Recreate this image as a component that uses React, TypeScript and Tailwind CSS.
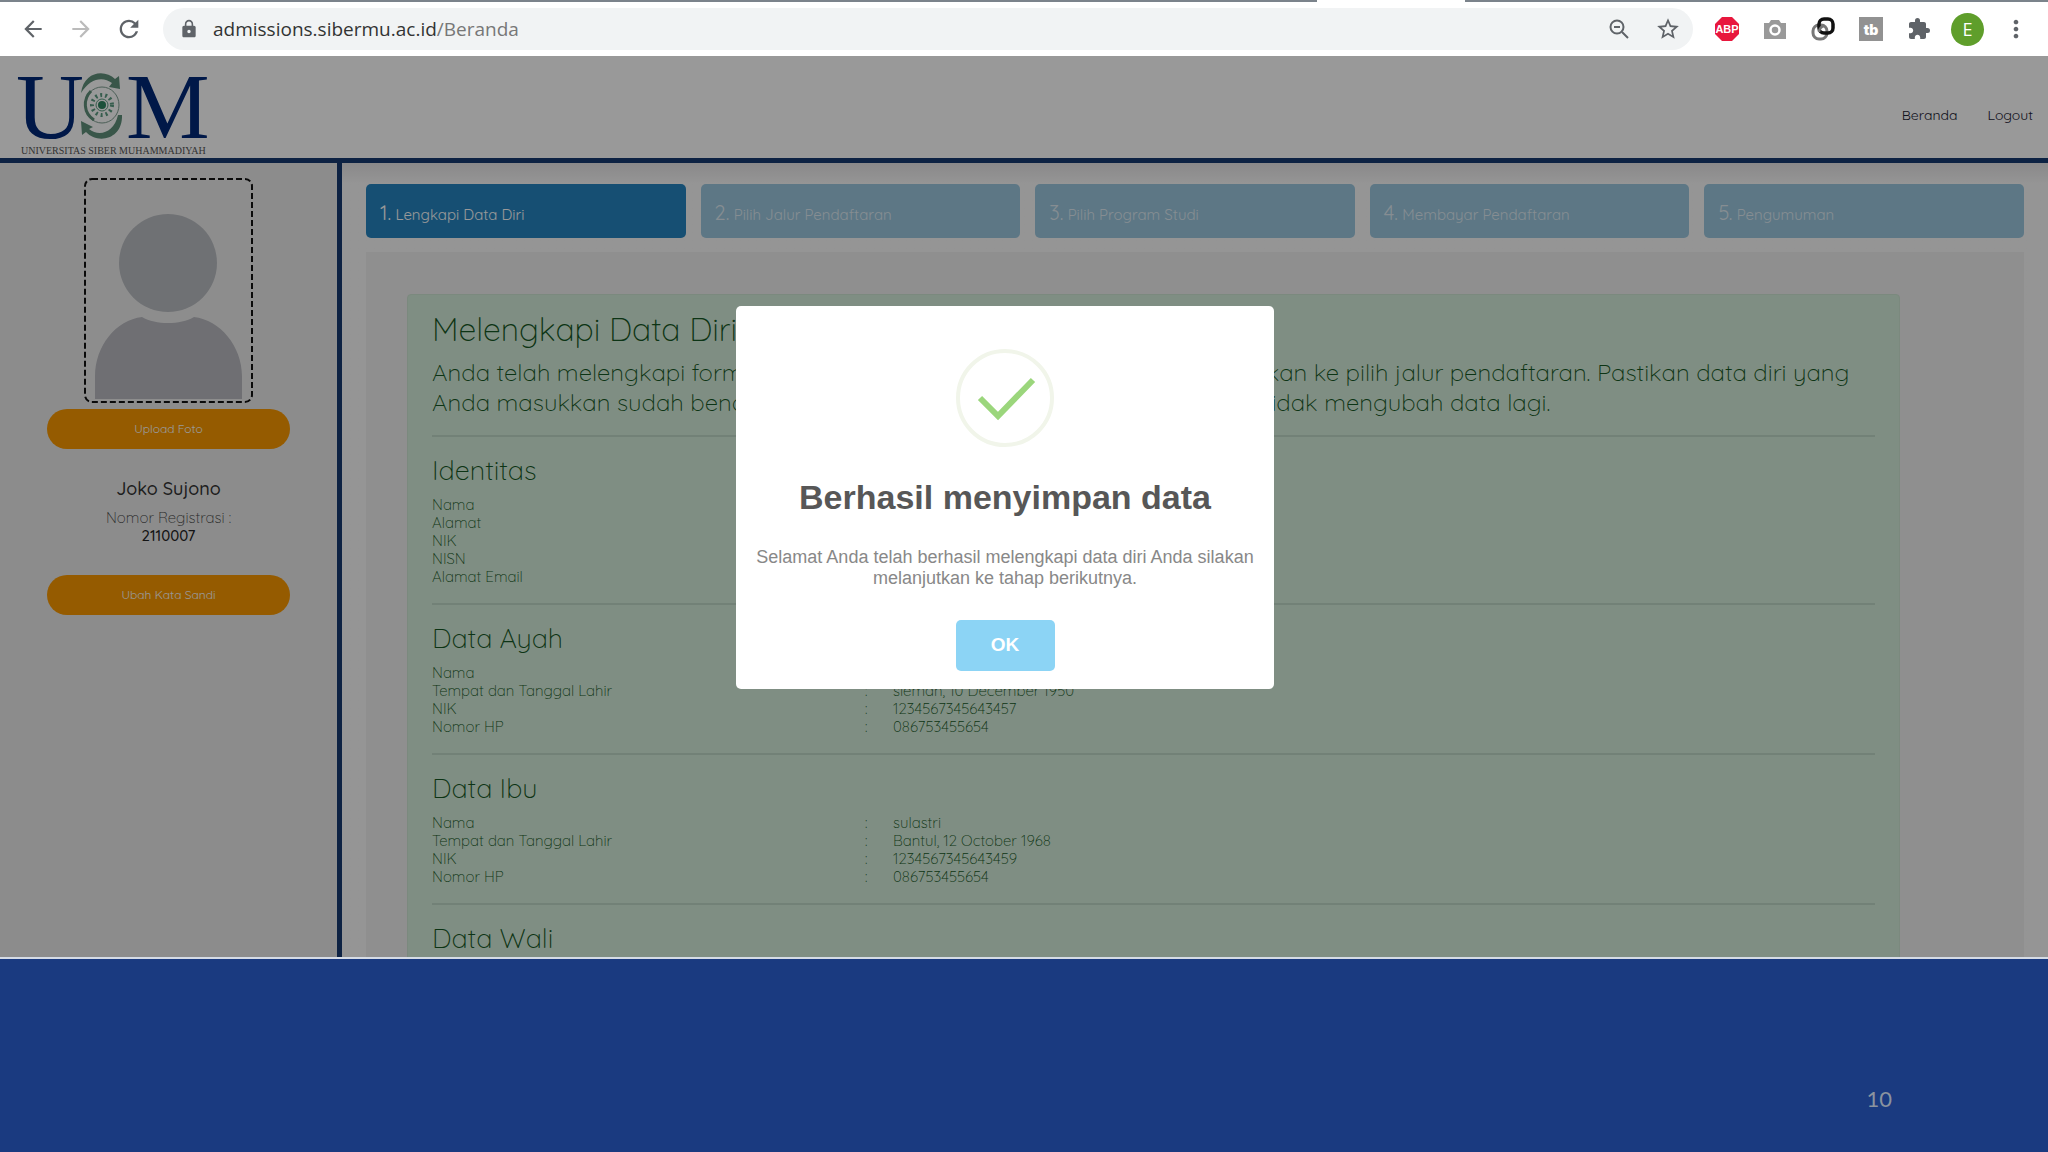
import React, { useState } from "react";
import { MdArrowBack, MdArrowForward, MdRefresh, MdLock, MdExtension, MdStarBorder, MdMoreVert } from "react-icons/md";

const steps = [
  "Lengkapi Data Diri",
  "Pilih Jalur Pendaftaran",
  "Pilih Program Studi",
  "Membayar Pendaftaran",
  "Pengumuman",
];

const sections = [
  {
    title: "Identitas",
    rows: [
      ["Nama", ""],
      ["Alamat", ""],
      ["NIK", ""],
      ["NISN", ""],
      ["Alamat Email", ""],
    ],
  },
  {
    title: "Data Ayah",
    rows: [
      ["Nama", ""],
      ["Tempat dan Tanggal Lahir", "sleman, 10 December 1950"],
      ["NIK", "1234567345643457"],
      ["Nomor HP", "086753455654"],
    ],
  },
  {
    title: "Data Ibu",
    rows: [
      ["Nama", "sulastri"],
      ["Tempat dan Tanggal Lahir", "Bantul, 12 October 1968"],
      ["NIK", "1234567345643459"],
      ["Nomor HP", "086753455654"],
    ],
  },
  { title: "Data Wali", rows: [] },
];

const ZoomOut = () => (
  <svg viewBox="0 0 24 24" className="size-6" fill="none" stroke="#5f6368" strokeWidth="2">
    <circle cx="10" cy="10" r="6.5" />
    <path d="M15 15l6 6M7 10h6" />
  </svg>
);

const Camera = () => (
  <svg viewBox="0 0 24 24" className="size-6">
    <path d="M1 6h5l2-3h8l2 3h5v16H1z" fill="#999" />
    <circle cx="12" cy="13" r="4.5" fill="none" stroke="#fff" strokeWidth="2.5" />
  </svg>
);

const Rings = () => (
  <svg viewBox="0 0 24 24" className="size-6" fill="none">
    <rect x="2" y="8" width="14" height="14" rx="6" stroke="#777" strokeWidth="3" />
    <rect x="8" y="2" width="14" height="14" rx="5" stroke="#111" strokeWidth="3.5" />
    <path d="M8 15a6 6 0 0 1 6-6" stroke="#777" strokeWidth="2.5" />
  </svg>
);

const Logo = () => (
  <svg viewBox="0 0 200 100" className="h-[100px] w-[200px] overflow-visible" role="img" aria-label="Universitas Siber Muhammadiyah">
    <g fontFamily="Liberation Serif, serif" fill="#002878">
      <text x="0" y="81" fontSize="94">U</text>
      <text x="110" y="81" fontSize="94">M</text>
      <text x="5" y="97" fontSize="10" fill="#555">UNIVERSITAS SIBER MUHAMMADIYAH</text>
    </g>
    <g fill="#5f8f7a">
      <path d="M65 36c3-22 24-24 34-14l4-3 1 13-11-2 3-4c-9-7-22-5-31 10z" />
      <path d="M106 58c1 24-24 30-36 17l-4 3-1-14 12 6-4 2c10 8 25 4 29-14z" />
    </g>
    <ellipse cx="86" cy="48" rx="17" ry="18" fill="none" stroke="#7f9f92" strokeWidth="1" />
    <path d="M75 34c-8 8-8 22 3 29" fill="none" stroke="#5f8f7a" strokeWidth="3" />
    <circle cx="86" cy="48" r="10" fill="none" stroke="#5c9c82" strokeWidth="4" strokeDasharray="2 3" />
    <circle cx="86" cy="48" r="6" fill="none" stroke="#5c9c82" strokeWidth="1" />
    <circle cx="86" cy="48" r="4" fill="#2f8561" />
  </svg>
);

const BrowserBar = () => (
  <div className="shrink-0 bg-white">
    {/* bottom edge of the tab strip, with the active tab */}
    <div className="flex h-[2px] justify-end bg-[#7b838b] pr-[583px]">
      <span className="w-[148px] bg-white" />
    </div>
    <div className="flex h-[54px] items-center pr-[18px] pl-5 text-[#5f6368]">
      <button aria-label="Back"><MdArrowBack className="size-[26px]" /></button>
      <button aria-label="Forward" className="ml-[22px] text-[#bbb]"><MdArrowForward className="size-[26px]" /></button>
      <button aria-label="Reload" className="ml-[21px]"><MdRefresh className="size-[28px]" /></button>
      <div className="ml-5 flex h-[42px] flex-1 items-center rounded-full bg-[#f1f3f4] pr-3 pl-4">
        <MdLock className="size-5" />
        <div className="ml-[14px] flex-1 font-['Open_Sans',sans-serif] text-[19px] text-[#333]">
          admissions.sibermu.ac.id<span className="text-[#777]">/Beranda</span>
        </div>
        <button aria-label="Zoom" className="mr-6"><ZoomOut /></button>
        <button aria-label="Bookmark"><MdStarBorder className="size-[26px]" /></button>
      </div>
      <div className="ml-[22px] flex items-center gap-6">
        <svg viewBox="0 0 24 24" className="size-6">
          <path d="M7 0h10l7 7v10l-7 7H7l-7-7V7z" fill="#e8173d" />
          <text x="12" y="16" textAnchor="middle" fontSize="11" fontWeight="700" fontFamily="Liberation Sans, sans-serif" fill="#fff">ABP</text>
        </svg>
        <Camera />
        <Rings />
        <span className="flex size-6 items-center justify-center bg-[#929292] font-['Inter',sans-serif] text-[14px] font-black text-white">tb</span>
        <MdExtension className="size-6" />
      </div>
      <span className="ml-5 flex size-[33px] items-center justify-center rounded-full bg-[#5f9e2b] font-['Open_Sans',sans-serif] text-[18px] text-white">E</span>
      <button aria-label="Menu" className="ml-[18px]"><MdMoreVert className="size-[28px]" /></button>
    </div>
  </div>
);

const Sidebar = () => (
  <aside className="flex w-[342px] shrink-0 flex-col items-center border-r-[5px] border-[#163971] bg-[#e9e9e9] pt-[15px] text-center">
    <svg viewBox="0 0 169 225" className="h-[225px] w-[169px]">
      <rect x="1" y="1" width="167" height="223" rx="7" fill="#f0f0f0" fillOpacity="0.5" stroke="#111" strokeWidth="2" strokeDasharray="6 3" />
      <circle cx="84" cy="85" r="49" fill="#babdc2" />
      <path d="M11 221v-23c0-30 21-56 47-59 14 8 38 8 52 0 26 3 48 29 48 59v23z" fill="#b9bac0" />
    </svg>
    <button className="mt-[6px] h-10 w-[243px] rounded-full bg-[#f89800] text-[12px] text-white">Upload Foto</button>
    <h2 className="mt-7 text-[18px] leading-6 font-medium text-[#333]">Joko Sujono</h2>
    <p className="mt-2 text-[15px] leading-[18px] font-light text-[#444]">
      Nomor Registrasi :<br />
      <span className="font-medium text-[#222]">2110007</span>
    </p>
    <button className="mt-[30px] h-10 w-[243px] rounded-full bg-[#f89800] text-[12px] text-white">Ubah Kata Sandi</button>
  </aside>
);

const SuccessDialog = ({ onClose }: { onClose: () => void }) => (
  <div className="absolute inset-0 flex items-start justify-center bg-black/40 pt-[250px] pr-[38px]">
    <div role="dialog" aria-modal="true" className="flex w-[538px] flex-col items-center rounded-[5px] bg-white px-4 pt-[43px] pb-[18px] text-center font-['Liberation_Sans',sans-serif]">
      <svg viewBox="0 0 98 98" className="size-[98px]" fill="none">
        <circle cx="49" cy="49" r="47" stroke="#f1f5ea" strokeWidth="4" />
        <path d="M24 49l18 18 35-36" stroke="#9bd67c" strokeWidth="6" />
      </svg>
      <h2 className="mt-[30px] text-[34px] leading-10 font-bold text-[#575757]">Berhasil menyimpan data</h2>
      <p className="mt-[30px] text-[18px] leading-[21px] text-[#888]">
        Selamat Anda telah berhasil melengkapi data diri Anda silakan melanjutkan ke tahap berikutnya.
      </p>
      <button onClick={onClose} className="mt-[31px] h-[51px] w-[99px] rounded-[5px] bg-[#8cd4f5] text-[19px] font-bold text-white">
        OK
      </button>
    </div>
  </div>
);

export default function App() {
  const [open, setOpen] = useState(true);

  return (
    <div className="flex h-screen flex-col overflow-hidden bg-[#1a3a80]">
      <BrowserBar />

      <div className="relative flex min-h-0 flex-1 flex-col overflow-hidden bg-white font-['Quicksand','Inter',sans-serif] [font-feature-settings:'cv11']">
        <header className="flex h-[107px] shrink-0 items-center justify-between border-b-[5px] border-[#163971] pr-[15px] pl-4">
          <Logo />
          <nav className="flex gap-[30px] pt-4 text-[14px] text-[#223]">
            <a href="#beranda">Beranda</a>
            <a href="#logout">Logout</a>
          </nav>
        </header>

        <div className="flex min-h-0 flex-1">
          <Sidebar />
          <main className="flex min-w-0 flex-1 flex-col bg-linear-to-b from-[#e6e4e6] to-[#f8f8f8] to-[20px] pt-[21px] pr-6 pl-6">
            <ol className="flex shrink-0 gap-[15px]">
              {steps.map((step, i) => (
                <li
                  key={step}
                  className={
                    i === 0
                      ? "h-[54px] flex-1 rounded-[5px] bg-[#2584c0] px-[14px] pt-[14px] text-white"
                      : "h-[54px] flex-1 rounded-[5px] bg-[#9bc6de] px-[14px] pt-[14px] text-[#dfecf4]"
                  }
                >
                  <span className="text-[20px]">{i + 1}.</span> <span className="text-[15px]">{step}</span>
                </li>
              ))}
            </ol>

            <div className="mt-[14px] bg-[#eee] pt-[42px] pr-[124px] pl-[41px]">
              <div className="rounded-t-[4px] border border-[#cde4d3] bg-[#d4edda] px-6 pt-4 text-[#155724]">
                <h1 className="text-[32px] leading-9 font-light">Melengkapi Data Diri</h1>
                <p className="mt-[10px] mb-[18px] text-[24px] leading-[30px] font-light whitespace-nowrap">
                  Anda telah melengkapi formulir data diri secara lengkap, silakan Anda lanjutkan ke pilih jalur pendaftaran. Pastikan data diri yang
                  <br />
                  Anda masukkan sudah benar setelah melanjutkan ke tahap berikutnya dan tidak mengubah data lagi.
                </p>
                {sections.map((section) => (
                  <section key={section.title} className="border-t-2 border-[#bfd8c6] pt-[18px] pb-[17px]">
                    <h2 className="mb-[11px] text-[27px] leading-[30px] font-light">{section.title}</h2>
                    <table className="text-left text-[15px] leading-[18px] font-light">
                      <tbody>
                        {section.rows.map(([label, value]) => (
                          <tr key={label}>
                            <th className="w-[433px] p-0 font-light">{label}</th>
                            <td className="w-7 p-0">:</td>
                            <td className="p-0">{value}</td>
                          </tr>
                        ))}
                      </tbody>
                    </table>
                  </section>
                ))}
              </div>
            </div>
          </main>
        </div>

        {open && <SuccessDialog onClose={() => setOpen(false)} />}
      </div>

      <footer className="flex h-[195px] shrink-0 items-center justify-end border-t-2 border-[#d5dbe5] pr-[156px] pt-[86px] font-['Lato',sans-serif] text-[22px] text-[#8a939f]">
        10
      </footer>
    </div>
  );
}
